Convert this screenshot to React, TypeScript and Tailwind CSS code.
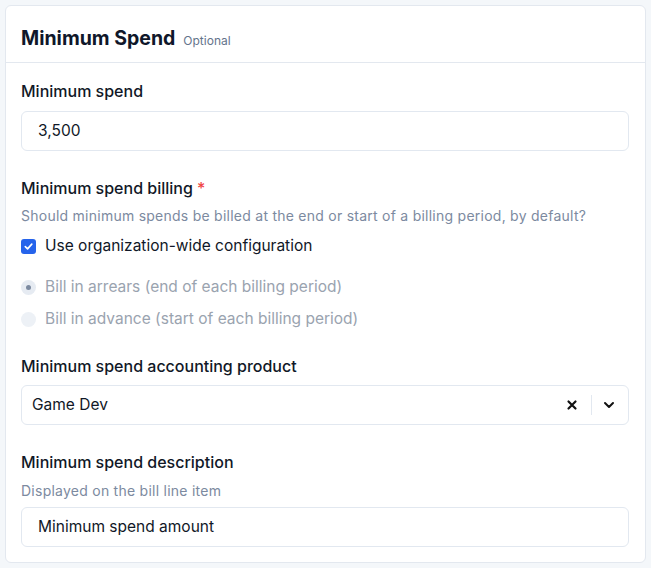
import React from "react";

export default function App() {
  const font = { fontFamily: "Inter, 'Noto Sans', sans-serif" };
  return (
    <div className="min-h-[568px] w-[651px] bg-[#f4f7fa] p-[5px]" style={font}>
      <div className="w-[641px] rounded-[6px] border border-[#e3e8ef] bg-white">
        <div className="flex items-baseline gap-2 border-b border-[#e3e8ef] px-[15px] pt-[18px] pb-[10px]">
          <h2 className="text-[19.5px] font-bold leading-[28px] text-[#0f172a]">Minimum Spend</h2>
          <span className="text-[12px] text-[#64748b]">Optional</span>
        </div>
        <div className="flex flex-col pl-[15px] pr-[16px] pt-[19px] pb-[15px]">
          <label className="text-[16px] font-medium leading-[18px] text-[#111827]">Minimum spend</label>
          <div className="mt-[11px] flex h-[40px] items-center rounded-[6px] border border-[#e2e8f0] px-4 text-[15.5px] text-[#111827]">
            3,500
          </div>

          <label className="mt-[28px] text-[16px] font-medium leading-[18px] text-[#111827]">
            Minimum spend billing <span className="text-[#ef4444]">*</span>
          </label>
          <p className="mt-[11px] text-[14px] leading-[16px] tracking-[0.25px] text-[#7c8aa0]">
            Should minimum spends be billed at the end or start of a billing period, by default?
          </p>
          <div className="mt-[11px] flex items-center gap-[9px]">
            <span className="flex h-[15px] w-[15px] items-center justify-center rounded-[3px] bg-[#2563eb]">
              <svg width="11" height="11" viewBox="0 0 12 12" fill="none">
                <path d="M2.5 6.2 L5 8.6 L9.6 3.4" stroke="white" strokeWidth="1.8" strokeLinecap="round" strokeLinejoin="round" />
              </svg>
            </span>
            <span className="text-[15.5px] leading-[22px] text-[#111827]">Use organization-wide configuration</span>
          </div>
          <div className="mt-[19px] flex items-center gap-[9px]">
            <span className="flex h-[15px] w-[15px] items-center justify-center rounded-full bg-[#e6ebf2]">
              <span className="h-[5px] w-[5px] rounded-full bg-[#7c8aa0]" />
            </span>
            <span className="text-[15.5px] leading-[22px] text-[#9aa3af]">Bill in arrears (end of each billing period)</span>
          </div>
          <div className="mt-[10px] flex items-center gap-[9px]">
            <span className="h-[15px] w-[15px] rounded-full bg-[#edf1f6]" />
            <span className="text-[15.5px] leading-[22px] text-[#9aa3af]">Bill in advance (start of each billing period)</span>
          </div>

          <label className="mt-[27px] text-[16px] font-medium leading-[18px] text-[#111827]">
            Minimum spend accounting product
          </label>
          <div className="mt-[10px] flex h-[40px] items-center rounded-[6px] border border-[#e2e8f0] pl-[10px] pr-[12px] text-[15.5px] text-[#111827]">
            <span className="flex-1">Game Dev</span>
            <svg width="12" height="12" viewBox="0 0 12 12" className="mr-[13px]">
              <path d="M2.5 2.5 L9.5 9.5 M9.5 2.5 L2.5 9.5" stroke="#111" strokeWidth="2.2" strokeLinecap="round" />
            </svg>
            <span className="h-[20px] w-px bg-[#e2e8f0]" />
            <svg width="14" height="14" viewBox="0 0 14 14" className="ml-[10px]">
              <path d="M3 5 L7 9 L11 5" stroke="#111" strokeWidth="2" fill="none" strokeLinecap="round" strokeLinejoin="round" />
            </svg>
          </div>

          <label className="mt-[28px] text-[16px] font-medium leading-[18px] text-[#111827]">
            Minimum spend description
          </label>
          <p className="mt-[12px] text-[14px] leading-[16px] tracking-[0.25px] text-[#7c8aa0]">Displayed on the bill line item</p>
          <div className="mt-[8px] flex h-[40px] items-center rounded-[6px] border border-[#e2e8f0] px-4 text-[15.5px] text-[#111827]">
            Minimum spend amount
          </div>
        </div>
      </div>
    </div>
  );
}
